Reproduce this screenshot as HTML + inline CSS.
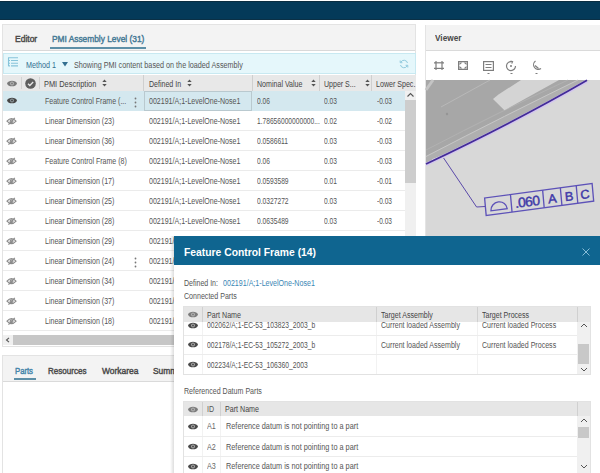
<!DOCTYPE html>
<html><head><meta charset="utf-8">
<style>
*{box-sizing:border-box;margin:0;padding:0}
html,body{width:600px;height:473px;overflow:hidden;background:#fff;font-family:"Liberation Sans",sans-serif;color:#555;position:relative}
#w{position:absolute;left:0;top:0;width:600px;height:473px;overflow:hidden}
.a{position:absolute}
.t{position:absolute;white-space:nowrap}
svg{overflow:visible}
</style></head><body><div id="w">
<div class="a" style="left:0px;top:1px;width:600px;height:19px;background:#043a59;"></div>
<div class="a" style="left:0px;top:1px;width:600px;height:1px;background:#0a2d40;"></div>
<div class="a" style="left:0px;top:19px;width:600px;height:1px;background:#0b3045;"></div>
<div class="a" style="left:2px;top:24px;width:414px;height:323px;background:#fff;border:1px solid #e3e3e3"></div>
<div class="a" style="left:3px;top:25px;width:412px;height:25px;background:#f3f3f3;"></div>
<div class="a" style="left:3px;top:50px;width:412px;height:1px;background:#d9d9d9;"></div>
<div class="t" style="left:15px;top:33.0px;font-size:9.52px;letter-spacing:0;color:#4a4a4a;font-weight:normal;line-height:12px;transform:scaleX(0.8924);transform-origin:0 50%;-webkit-text-stroke:0.45px currentColor">Editor</div>
<div class="t" style="left:51.5px;top:33.0px;font-size:9.52px;letter-spacing:0;color:#467a96;font-weight:normal;line-height:12px;transform:scaleX(0.8771);transform-origin:0 50%;-webkit-text-stroke:0.45px currentColor">PMI Assembly Level (31)</div>
<div class="a" style="left:50px;top:47px;width:96px;height:2px;background:#5d8fa7;"></div>
<div class="a" style="left:3px;top:52.5px;width:413px;height:21.5px;background:#e5f7fb;border:1px solid #c8e9f1"></div>
<svg class="a" style="left:8px;top:57px" width="10" height="10" viewBox="0 0 10 10"><g stroke="#86c4da" stroke-width="1.1" fill="none"><path d="M0 0.8h10M0.5 0.8v8.5M3 3.5h7M3 6.2h7M3 8.9h7M0.5 3.5h1.5M0.5 6.2h1.5M0.5 8.9h1.5"/></g></svg>
<div class="t" style="left:26px;top:58.8px;font-size:8.40px;letter-spacing:0;color:#336f90;font-weight:normal;line-height:12px;transform:scaleX(0.8585);transform-origin:0 50%;">Method 1</div>
<svg class="a" style="left:62px;top:62px" width="6" height="5" viewBox="0 0 6 5"><path d="M0 0h6L3 4.5z" fill="#336f90"/></svg>
<div class="t" style="left:74px;top:58.8px;font-size:8.40px;letter-spacing:0;color:#555;font-weight:normal;line-height:12px;transform:scaleX(0.8634);transform-origin:0 50%;">Showing PMI content based on the loaded Assembly</div>
<svg class="a" style="left:399px;top:59px" width="10" height="10" viewBox="0 0 10 10"><g fill="none" stroke="#8fc9dd" stroke-width="1"><path d="M8.5 4A3.6 3.6 0 0 0 1.8 3.2M1.5 6A3.6 3.6 0 0 0 8.2 6.8"/><path d="M1.2 1.5v2.2h2.2M8.8 8.5V6.3H6.6"/></g></svg>
<div class="a" style="left:3px;top:75px;width:413px;height:16px;background:#e8e8e8;"></div>
<svg class="a" style="left:7px;top:80px" width="10" height="7" viewBox="0 0 10 7"><path d="M0 3.5C1 -0.3 9 -0.3 10 3.5C9 7.3 1 7.3 0 3.5Z" fill="#7a7a7a"/><circle cx="5" cy="3.5" r="1.9" fill="#e8e8e8" opacity="0.55"/><circle cx="5" cy="3.5" r="1" fill="#7a7a7a"/></svg>
<div class="a" style="left:21px;top:77px;width:1px;height:12px;background:#d2d2d2;"></div>
<svg class="a" style="left:25px;top:78px" width="11" height="11" viewBox="0 0 11 11"><circle cx="5.5" cy="5.5" r="5.3" fill="#5e5e5e"/><path d="M3 5.7l1.8 1.8L8.2 4" stroke="#e8e8e8" stroke-width="1.3" fill="none"/></svg>
<div class="a" style="left:39px;top:77px;width:1px;height:12px;background:#d2d2d2;"></div>
<div class="t" style="left:43.8px;top:77.5px;font-size:8.40px;letter-spacing:0;color:#444;font-weight:normal;line-height:12px;transform:scaleX(0.8852);transform-origin:0 50%;">PMI Description</div>
<svg class="a" style="left:101.5px;top:79px" width="5" height="8" viewBox="0 0 5 8"><path d="M0.3 3.1h4.4L2.5 0.6zM0.3 4.9h4.4L2.5 7.4z" fill="#555"/></svg>
<div class="a" style="left:143px;top:75px;width:1px;height:16px;background:#cfcfcf;"></div>
<div class="t" style="left:149px;top:77.5px;font-size:8.40px;letter-spacing:0;color:#444;font-weight:normal;line-height:12px;transform:scaleX(0.8406);transform-origin:0 50%;">Defined In</div>
<svg class="a" style="left:187px;top:79px" width="5" height="8" viewBox="0 0 5 8"><path d="M0.3 3.1h4.4L2.5 0.6zM0.3 4.9h4.4L2.5 7.4z" fill="#555"/></svg>
<div class="a" style="left:252px;top:75px;width:1px;height:16px;background:#cfcfcf;"></div>
<div class="t" style="left:257px;top:77.5px;font-size:8.40px;letter-spacing:0;color:#444;font-weight:normal;line-height:12px;transform:scaleX(0.8447);transform-origin:0 50%;">Nominal Value</div>
<svg class="a" style="left:311px;top:79px" width="5" height="8" viewBox="0 0 5 8"><path d="M0.3 3.1h4.4L2.5 0.6zM0.3 4.9h4.4L2.5 7.4z" fill="#555"/></svg>
<div class="a" style="left:319px;top:75px;width:1px;height:16px;background:#cfcfcf;"></div>
<div class="t" style="left:324px;top:77.5px;font-size:8.40px;letter-spacing:0;color:#444;font-weight:normal;line-height:12px;transform:scaleX(0.8399);transform-origin:0 50%;">Upper S...</div>
<svg class="a" style="left:365px;top:79px" width="5" height="8" viewBox="0 0 5 8"><path d="M0.3 3.1h4.4L2.5 0.6zM0.3 4.9h4.4L2.5 7.4z" fill="#555"/></svg>
<div class="a" style="left:371px;top:75px;width:1px;height:16px;background:#cfcfcf;"></div>
<div class="t" style="left:376px;top:77.5px;font-size:8.40px;letter-spacing:0;color:#444;font-weight:normal;line-height:12px;transform:scaleX(0.8457);transform-origin:0 50%;">Lower Spec.</div>
<div class="a" style="left:3px;top:91px;width:402px;height:20px;background:#d4e8ef;"></div>
<svg class="a" style="left:7px;top:97px" width="10" height="7" viewBox="0 0 10 7"><path d="M0 3.5C1 -0.3 9 -0.3 10 3.5C9 7.3 1 7.3 0 3.5Z" fill="#474747"/><circle cx="5" cy="3.5" r="1.9" fill="#d4e8ef" opacity="0.55"/><circle cx="5" cy="3.5" r="1" fill="#474747"/></svg>
<div class="a" style="left:144px;top:91px;width:108px;height:20px;background:transparent;border:1px solid #b9c9cf"></div>
<div class="t" style="left:44.5px;top:95.3px;font-size:8.40px;letter-spacing:0;color:#555;font-weight:normal;line-height:12px;transform:scaleX(0.8393);transform-origin:0 50%;">Feature Control Frame (...</div>
<div class="t" style="left:148.5px;top:95.3px;font-size:8.40px;letter-spacing:0;color:#555;font-weight:normal;line-height:12px;transform:scaleX(0.8423);transform-origin:0 50%;">002191/A;1-LevelOne-Nose1</div>
<div class="t" style="left:257px;top:95.3px;font-size:8.40px;letter-spacing:0;color:#555;font-weight:normal;line-height:12px;transform:scaleX(0.7900);transform-origin:0 50%;">0.06</div>
<div class="t" style="left:324px;top:95.3px;font-size:8.40px;letter-spacing:0;color:#555;font-weight:normal;line-height:12px;transform:scaleX(0.7900);transform-origin:0 50%;">0.03</div>
<div class="t" style="left:376.6px;top:95.3px;font-size:8.40px;letter-spacing:0;color:#555;font-weight:normal;line-height:12px;transform:scaleX(0.7831);transform-origin:0 50%;">-0.03</div>
<svg class="a" style="left:134px;top:96.5px" width="3" height="11" viewBox="0 0 3 11"><circle cx="1.5" cy="1.5" r="0.9" fill="#777"/><circle cx="1.5" cy="5.5" r="0.9" fill="#777"/><circle cx="1.5" cy="9.5" r="0.9" fill="#777"/></svg>
<div class="a" style="left:3px;top:130px;width:402px;height:1px;background:#ebebeb;"></div>
<svg class="a" style="left:6px;top:117px" width="11" height="9" viewBox="0 0 11 9"><g fill="none" stroke="#8c8c8c" stroke-width="1.2"><path d="M1 4.2Q5.5 -0.8 10 4.2Q5.5 9.2 1 4.2z"/><circle cx="5.5" cy="4.2" r="1.4"/><path d="M2.5 7.6L8.8 0.8"/></g></svg>
<div class="t" style="left:44.5px;top:115.3px;font-size:8.40px;letter-spacing:0;color:#555;font-weight:normal;line-height:12px;transform:scaleX(0.8420);transform-origin:0 50%;">Linear Dimension (23)</div>
<div class="t" style="left:148.5px;top:115.3px;font-size:8.40px;letter-spacing:0;color:#555;font-weight:normal;line-height:12px;transform:scaleX(0.8423);transform-origin:0 50%;">002191/A;1-LevelOne-Nose1</div>
<div class="t" style="left:257px;top:115.3px;font-size:8.40px;letter-spacing:0;color:#555;font-weight:normal;line-height:12px;transform:scaleX(0.7923);transform-origin:0 50%;">1.78656000000000...</div>
<div class="t" style="left:324px;top:115.3px;font-size:8.40px;letter-spacing:0;color:#555;font-weight:normal;line-height:12px;transform:scaleX(0.7900);transform-origin:0 50%;">0.02</div>
<div class="t" style="left:376.6px;top:115.3px;font-size:8.40px;letter-spacing:0;color:#555;font-weight:normal;line-height:12px;transform:scaleX(0.7831);transform-origin:0 50%;">-0.02</div>
<div class="a" style="left:3px;top:150px;width:402px;height:1px;background:#ebebeb;"></div>
<svg class="a" style="left:6px;top:137px" width="11" height="9" viewBox="0 0 11 9"><g fill="none" stroke="#8c8c8c" stroke-width="1.2"><path d="M1 4.2Q5.5 -0.8 10 4.2Q5.5 9.2 1 4.2z"/><circle cx="5.5" cy="4.2" r="1.4"/><path d="M2.5 7.6L8.8 0.8"/></g></svg>
<div class="t" style="left:44.5px;top:135.3px;font-size:8.40px;letter-spacing:0;color:#555;font-weight:normal;line-height:12px;transform:scaleX(0.8420);transform-origin:0 50%;">Linear Dimension (36)</div>
<div class="t" style="left:148.5px;top:135.3px;font-size:8.40px;letter-spacing:0;color:#555;font-weight:normal;line-height:12px;transform:scaleX(0.8423);transform-origin:0 50%;">002191/A;1-LevelOne-Nose1</div>
<div class="t" style="left:257px;top:135.3px;font-size:8.40px;letter-spacing:0;color:#555;font-weight:normal;line-height:12px;transform:scaleX(0.7961);transform-origin:0 50%;">0.0586611</div>
<div class="t" style="left:324px;top:135.3px;font-size:8.40px;letter-spacing:0;color:#555;font-weight:normal;line-height:12px;transform:scaleX(0.7900);transform-origin:0 50%;">0.03</div>
<div class="t" style="left:376.6px;top:135.3px;font-size:8.40px;letter-spacing:0;color:#555;font-weight:normal;line-height:12px;transform:scaleX(0.7831);transform-origin:0 50%;">-0.03</div>
<div class="a" style="left:3px;top:170px;width:402px;height:1px;background:#ebebeb;"></div>
<svg class="a" style="left:6px;top:157px" width="11" height="9" viewBox="0 0 11 9"><g fill="none" stroke="#8c8c8c" stroke-width="1.2"><path d="M1 4.2Q5.5 -0.8 10 4.2Q5.5 9.2 1 4.2z"/><circle cx="5.5" cy="4.2" r="1.4"/><path d="M2.5 7.6L8.8 0.8"/></g></svg>
<div class="t" style="left:44.5px;top:155.3px;font-size:8.40px;letter-spacing:0;color:#555;font-weight:normal;line-height:12px;transform:scaleX(0.8416);transform-origin:0 50%;">Feature Control Frame (8)</div>
<div class="t" style="left:148.5px;top:155.3px;font-size:8.40px;letter-spacing:0;color:#555;font-weight:normal;line-height:12px;transform:scaleX(0.8423);transform-origin:0 50%;">002191/A;1-LevelOne-Nose1</div>
<div class="t" style="left:257px;top:155.3px;font-size:8.40px;letter-spacing:0;color:#555;font-weight:normal;line-height:12px;transform:scaleX(0.7900);transform-origin:0 50%;">0.06</div>
<div class="t" style="left:324px;top:155.3px;font-size:8.40px;letter-spacing:0;color:#555;font-weight:normal;line-height:12px;transform:scaleX(0.7900);transform-origin:0 50%;">0.03</div>
<div class="t" style="left:376.6px;top:155.3px;font-size:8.40px;letter-spacing:0;color:#555;font-weight:normal;line-height:12px;transform:scaleX(0.7831);transform-origin:0 50%;">-0.03</div>
<div class="a" style="left:3px;top:190px;width:402px;height:1px;background:#ebebeb;"></div>
<svg class="a" style="left:6px;top:177px" width="11" height="9" viewBox="0 0 11 9"><g fill="none" stroke="#8c8c8c" stroke-width="1.2"><path d="M1 4.2Q5.5 -0.8 10 4.2Q5.5 9.2 1 4.2z"/><circle cx="5.5" cy="4.2" r="1.4"/><path d="M2.5 7.6L8.8 0.8"/></g></svg>
<div class="t" style="left:44.5px;top:175.3px;font-size:8.40px;letter-spacing:0;color:#555;font-weight:normal;line-height:12px;transform:scaleX(0.8420);transform-origin:0 50%;">Linear Dimension (17)</div>
<div class="t" style="left:148.5px;top:175.3px;font-size:8.40px;letter-spacing:0;color:#555;font-weight:normal;line-height:12px;transform:scaleX(0.8423);transform-origin:0 50%;">002191/A;1-LevelOne-Nose1</div>
<div class="t" style="left:257px;top:175.3px;font-size:8.40px;letter-spacing:0;color:#555;font-weight:normal;line-height:12px;transform:scaleX(0.7976);transform-origin:0 50%;">0.0593589</div>
<div class="t" style="left:324px;top:175.3px;font-size:8.40px;letter-spacing:0;color:#555;font-weight:normal;line-height:12px;transform:scaleX(0.7900);transform-origin:0 50%;">0.01</div>
<div class="t" style="left:376.6px;top:175.3px;font-size:8.40px;letter-spacing:0;color:#555;font-weight:normal;line-height:12px;transform:scaleX(0.7831);transform-origin:0 50%;">-0.01</div>
<div class="a" style="left:3px;top:210px;width:402px;height:1px;background:#ebebeb;"></div>
<svg class="a" style="left:6px;top:197px" width="11" height="9" viewBox="0 0 11 9"><g fill="none" stroke="#8c8c8c" stroke-width="1.2"><path d="M1 4.2Q5.5 -0.8 10 4.2Q5.5 9.2 1 4.2z"/><circle cx="5.5" cy="4.2" r="1.4"/><path d="M2.5 7.6L8.8 0.8"/></g></svg>
<div class="t" style="left:44.5px;top:195.3px;font-size:8.40px;letter-spacing:0;color:#555;font-weight:normal;line-height:12px;transform:scaleX(0.8420);transform-origin:0 50%;">Linear Dimension (25)</div>
<div class="t" style="left:148.5px;top:195.3px;font-size:8.40px;letter-spacing:0;color:#555;font-weight:normal;line-height:12px;transform:scaleX(0.8423);transform-origin:0 50%;">002191/A;1-LevelOne-Nose1</div>
<div class="t" style="left:257px;top:195.3px;font-size:8.40px;letter-spacing:0;color:#555;font-weight:normal;line-height:12px;transform:scaleX(0.7976);transform-origin:0 50%;">0.0327272</div>
<div class="t" style="left:324px;top:195.3px;font-size:8.40px;letter-spacing:0;color:#555;font-weight:normal;line-height:12px;transform:scaleX(0.7900);transform-origin:0 50%;">0.03</div>
<div class="t" style="left:376.6px;top:195.3px;font-size:8.40px;letter-spacing:0;color:#555;font-weight:normal;line-height:12px;transform:scaleX(0.7831);transform-origin:0 50%;">-0.03</div>
<div class="a" style="left:3px;top:230px;width:402px;height:1px;background:#ebebeb;"></div>
<svg class="a" style="left:6px;top:217px" width="11" height="9" viewBox="0 0 11 9"><g fill="none" stroke="#8c8c8c" stroke-width="1.2"><path d="M1 4.2Q5.5 -0.8 10 4.2Q5.5 9.2 1 4.2z"/><circle cx="5.5" cy="4.2" r="1.4"/><path d="M2.5 7.6L8.8 0.8"/></g></svg>
<div class="t" style="left:44.5px;top:215.3px;font-size:8.40px;letter-spacing:0;color:#555;font-weight:normal;line-height:12px;transform:scaleX(0.8420);transform-origin:0 50%;">Linear Dimension (28)</div>
<div class="t" style="left:148.5px;top:215.3px;font-size:8.40px;letter-spacing:0;color:#555;font-weight:normal;line-height:12px;transform:scaleX(0.8423);transform-origin:0 50%;">002191/A;1-LevelOne-Nose1</div>
<div class="t" style="left:257px;top:215.3px;font-size:8.40px;letter-spacing:0;color:#555;font-weight:normal;line-height:12px;transform:scaleX(0.7976);transform-origin:0 50%;">0.0635489</div>
<div class="t" style="left:324px;top:215.3px;font-size:8.40px;letter-spacing:0;color:#555;font-weight:normal;line-height:12px;transform:scaleX(0.7900);transform-origin:0 50%;">0.03</div>
<div class="t" style="left:376.6px;top:215.3px;font-size:8.40px;letter-spacing:0;color:#555;font-weight:normal;line-height:12px;transform:scaleX(0.7831);transform-origin:0 50%;">-0.03</div>
<div class="a" style="left:3px;top:250px;width:402px;height:1px;background:#ebebeb;"></div>
<svg class="a" style="left:6px;top:237px" width="11" height="9" viewBox="0 0 11 9"><g fill="none" stroke="#8c8c8c" stroke-width="1.2"><path d="M1 4.2Q5.5 -0.8 10 4.2Q5.5 9.2 1 4.2z"/><circle cx="5.5" cy="4.2" r="1.4"/><path d="M2.5 7.6L8.8 0.8"/></g></svg>
<div class="t" style="left:44.5px;top:235.3px;font-size:8.40px;letter-spacing:0;color:#555;font-weight:normal;line-height:12px;transform:scaleX(0.8420);transform-origin:0 50%;">Linear Dimension (29)</div>
<div class="t" style="left:148.5px;top:235.3px;font-size:8.40px;letter-spacing:0;color:#555;font-weight:normal;line-height:12px;transform:scaleX(0.8423);transform-origin:0 50%;">002191/A;1-LevelOne-Nose1</div>
<div class="a" style="left:3px;top:270px;width:402px;height:1px;background:#ebebeb;"></div>
<svg class="a" style="left:6px;top:257px" width="11" height="9" viewBox="0 0 11 9"><g fill="none" stroke="#8c8c8c" stroke-width="1.2"><path d="M1 4.2Q5.5 -0.8 10 4.2Q5.5 9.2 1 4.2z"/><circle cx="5.5" cy="4.2" r="1.4"/><path d="M2.5 7.6L8.8 0.8"/></g></svg>
<div class="t" style="left:44.5px;top:255.3px;font-size:8.40px;letter-spacing:0;color:#555;font-weight:normal;line-height:12px;transform:scaleX(0.8420);transform-origin:0 50%;">Linear Dimension (24)</div>
<div class="t" style="left:148.5px;top:255.3px;font-size:8.40px;letter-spacing:0;color:#555;font-weight:normal;line-height:12px;transform:scaleX(0.8423);transform-origin:0 50%;">002191/A;1-LevelOne-Nose1</div>
<svg class="a" style="left:134px;top:256.5px" width="3" height="11" viewBox="0 0 3 11"><circle cx="1.5" cy="1.5" r="0.9" fill="#777"/><circle cx="1.5" cy="5.5" r="0.9" fill="#777"/><circle cx="1.5" cy="9.5" r="0.9" fill="#777"/></svg>
<div class="a" style="left:3px;top:290px;width:402px;height:1px;background:#ebebeb;"></div>
<svg class="a" style="left:6px;top:277px" width="11" height="9" viewBox="0 0 11 9"><g fill="none" stroke="#8c8c8c" stroke-width="1.2"><path d="M1 4.2Q5.5 -0.8 10 4.2Q5.5 9.2 1 4.2z"/><circle cx="5.5" cy="4.2" r="1.4"/><path d="M2.5 7.6L8.8 0.8"/></g></svg>
<div class="t" style="left:44.5px;top:275.3px;font-size:8.40px;letter-spacing:0;color:#555;font-weight:normal;line-height:12px;transform:scaleX(0.8420);transform-origin:0 50%;">Linear Dimension (34)</div>
<div class="t" style="left:148.5px;top:275.3px;font-size:8.40px;letter-spacing:0;color:#555;font-weight:normal;line-height:12px;transform:scaleX(0.8423);transform-origin:0 50%;">002191/A;1-LevelOne-Nose1</div>
<div class="a" style="left:3px;top:310px;width:402px;height:1px;background:#ebebeb;"></div>
<svg class="a" style="left:6px;top:297px" width="11" height="9" viewBox="0 0 11 9"><g fill="none" stroke="#8c8c8c" stroke-width="1.2"><path d="M1 4.2Q5.5 -0.8 10 4.2Q5.5 9.2 1 4.2z"/><circle cx="5.5" cy="4.2" r="1.4"/><path d="M2.5 7.6L8.8 0.8"/></g></svg>
<div class="t" style="left:44.5px;top:295.3px;font-size:8.40px;letter-spacing:0;color:#555;font-weight:normal;line-height:12px;transform:scaleX(0.8420);transform-origin:0 50%;">Linear Dimension (37)</div>
<div class="t" style="left:148.5px;top:295.3px;font-size:8.40px;letter-spacing:0;color:#555;font-weight:normal;line-height:12px;transform:scaleX(0.8423);transform-origin:0 50%;">002191/A;1-LevelOne-Nose1</div>
<div class="a" style="left:3px;top:330px;width:402px;height:1px;background:#ebebeb;"></div>
<svg class="a" style="left:6px;top:317px" width="11" height="9" viewBox="0 0 11 9"><g fill="none" stroke="#8c8c8c" stroke-width="1.2"><path d="M1 4.2Q5.5 -0.8 10 4.2Q5.5 9.2 1 4.2z"/><circle cx="5.5" cy="4.2" r="1.4"/><path d="M2.5 7.6L8.8 0.8"/></g></svg>
<div class="t" style="left:44.5px;top:315.3px;font-size:8.40px;letter-spacing:0;color:#555;font-weight:normal;line-height:12px;transform:scaleX(0.8420);transform-origin:0 50%;">Linear Dimension (18)</div>
<div class="t" style="left:148.5px;top:315.3px;font-size:8.40px;letter-spacing:0;color:#555;font-weight:normal;line-height:12px;transform:scaleX(0.8423);transform-origin:0 50%;">002191/A;1-LevelOne-Nose1</div>
<div class="a" style="left:405px;top:91px;width:11px;height:244px;background:#f0f0f0;"></div>
<svg class="a" style="left:406px;top:92px" width="9" height="6" viewBox="0 0 9 6"><path d="M1.5 4.5L4.5 1.5L7.5 4.5" stroke="#555" stroke-width="1.1" fill="none"/></svg>
<div class="a" style="left:405px;top:100px;width:11px;height:83px;background:#cdcdcd;"></div>
<div class="a" style="left:3px;top:335px;width:413px;height:10px;background:#f0f0f0;"></div>
<svg class="a" style="left:5px;top:337px" width="6" height="6" viewBox="0 0 6 6"><path d="M4 0.8L1.5 3L4 5.2" stroke="#555" stroke-width="1.1" fill="none"/></svg>
<div class="a" style="left:13px;top:335px;width:392px;height:10px;background:#c7c7c7;"></div>
<div class="a" style="left:425px;top:25px;width:175px;height:25px;background:#f3f3f3;"></div>
<div class="a" style="left:425px;top:49.5px;width:175px;height:1.5px;background:#dadada;"></div>
<div class="a" style="left:425px;top:25px;width:1px;height:211px;background:#e4e4e4;"></div>
<div class="t" style="left:435px;top:32.0px;font-size:8.93px;letter-spacing:0;color:#484848;font-weight:bold;line-height:12px;transform:scaleX(0.9251);transform-origin:0 50%;">Viewer</div>
<svg class="a" style="left:434px;top:61px" width="10" height="9" viewBox="0 0 10 9"><g fill="none" stroke="#7e7e7e" stroke-width="1.2"><rect x="2" y="1.8" width="6" height="5.6"/><path d="M0 1.8h2M8 1.8h2M0 7.4h2M8 7.4h2M2 0v1.8M8 0v1.8M2 7.4v1.6M8 7.4v1.6"/></g></svg>
<svg class="a" style="left:458px;top:61px" width="10" height="9" viewBox="0 0 10 9"><rect x="0.6" y="0.6" width="8.8" height="7.8" fill="none" stroke="#7e7e7e" stroke-width="1.2"/><g fill="#7e7e7e"><path d="M1.5 1.5h3l-3 2.5zM8.5 1.5h-3l3 2.5zM1.5 7.5h3l-3-2.5zM8.5 7.5h-3l3-2.5z"/></g></svg>
<svg class="a" style="left:482.5px;top:61px" width="11" height="14" viewBox="0 0 11 14"><g fill="none" stroke="#7e7e7e" stroke-width="1.2"><rect x="0.6" y="0.6" width="9.8" height="8.8"/><path d="M2.5 3.5h6M2.5 6.5h6"/></g><path d="M4.5 12.5h2" stroke="#7e7e7e" stroke-width="1"/></svg>
<svg class="a" style="left:506px;top:61px" width="11" height="14" viewBox="0 0 11 14"><g fill="none" stroke="#7e7e7e" stroke-width="1.2"><path d="M9.5 5A4.5 4.5 0 1 1 5.5 0.6"/><path d="M4.5 0.2l2 0.5-0.8 1.8"/></g><circle cx="5" cy="5" r="1" fill="#7e7e7e"/><path d="M4.5 12.5h2" stroke="#7e7e7e" stroke-width="1"/></svg>
<svg class="a" style="left:531px;top:60px" width="11" height="15" viewBox="0 0 11 15"><g fill="none" stroke="#7e7e7e" stroke-width="1.2"><path d="M4.5 1A4.5 4.5 0 1 0 10 8.5"/><path d="M4 5.5l3.5 3"/></g><path d="M4.5 13.5h2" stroke="#7e7e7e" stroke-width="1"/></svg>
<div class="a" style="left:426px;top:80px;width:174px;height:160px;background:#d8d8d8;"></div>
<svg class="a" style="left:426px;top:80px" width="174" height="156" viewBox="426 80 174 156">
<path d="M426 80H590L586.5 80.5Q514.5 122 426 164Z" fill="#a7a7a7"/>
<path d="M426 164Q514.5 122 587 80H577Q507 114 426 156Z" fill="#afafaf"/>
<path d="M426 156.5Q507 114.5 578 80" fill="none" stroke="#c6c6c6" stroke-width="1"/>
<path d="M426 150Q503 110 568 80" fill="none" stroke="#b4b4b4" stroke-width="0.8"/>
<path d="M493 99L498.5 94.5L521 80H559L504.4 110.3Z" fill="#d4d4d4"/>
<path d="M426 90L433 80" stroke="#c4c4c4" stroke-width="3"/>
<path d="M441 107L490 80" stroke="#bdbdbd" stroke-width="0.8"/>
<circle cx="447" cy="114" r="1.2" fill="#959595"/>
<path d="M432 160L443 156" stroke="#dcdcdc" stroke-width="1.5"/>
<path d="M426 164.5Q514.5 123 587 81" fill="none" stroke="#d3c6ee" stroke-width="3.2"/>
<path d="M426 164Q514.5 122.3 587 80.3" fill="none" stroke="#432c98" stroke-width="1.8"/>
<path d="M443.6 158L476.6 207L485 206.5" fill="none" stroke="#5b4aaa" stroke-width="1"/>
<g transform="matrix(1.018,-0.1375,0.09,1,484.6,198)">
 <g fill="none" stroke="#5d52b8" stroke-width="1.3">
  <path d="M0 0H105.6V17.6H0Z"/>
  <path d="M25.4 0v17.6M57 0v17.6M74.4 0v17.6M90 0v17.6"/>
  <path d="M5 13.5A7.7 7.5 0 0 1 21 13.5Z"/>
 </g>
 <g fill="#4038a8" stroke="#4038a8" stroke-width="0.45" font-family="Liberation Sans" font-size="13.5">
  <text x="29" y="14" letter-spacing="-0.6">.060</text>
  <text x="65.7" y="14" text-anchor="middle" font-size="12.5">A</text>
  <text x="82.2" y="14" text-anchor="middle" font-size="12.5">B</text>
  <text x="97.8" y="14" text-anchor="middle" font-size="12.5">C</text>
 </g>
</g>
</svg>
<div class="a" style="left:2px;top:355px;width:200px;height:125px;background:#fff;border:1px solid #e3e3e3"></div>
<div class="a" style="left:3px;top:356px;width:198px;height:26px;background:#f3f3f3;"></div>
<div class="a" style="left:3px;top:381px;width:198px;height:1px;background:#dadada;"></div>
<div class="t" style="left:15px;top:364.5px;font-size:9.52px;letter-spacing:0;color:#4585aa;font-weight:normal;line-height:12px;transform:scaleX(0.8092);transform-origin:0 50%;-webkit-text-stroke:0.45px currentColor">Parts</div>
<div class="a" style="left:13.5px;top:378px;width:22px;height:2px;background:#5d8fa7;"></div>
<div class="t" style="left:48px;top:364.5px;font-size:9.52px;letter-spacing:0;color:#4a4a4a;font-weight:normal;line-height:12px;transform:scaleX(0.8450);transform-origin:0 50%;-webkit-text-stroke:0.45px currentColor">Resources</div>
<div class="t" style="left:101.5px;top:364.5px;font-size:9.52px;letter-spacing:0;color:#4a4a4a;font-weight:normal;line-height:12px;transform:scaleX(0.8885);transform-origin:0 50%;-webkit-text-stroke:0.45px currentColor">Workarea</div>
<div class="t" style="left:152.5px;top:364.5px;font-size:9.52px;letter-spacing:0;color:#4a4a4a;font-weight:normal;line-height:12px;transform:scaleX(0.8838);transform-origin:0 50%;-webkit-text-stroke:0.45px currentColor">Summary</div>
<div class="a" style="left:169.6px;top:236px;width:4px;height:237px;background:linear-gradient(90deg,rgba(0,0,0,0.0),rgba(0,0,0,0.13));"></div>
<div class="a" style="left:173.6px;top:236px;width:426.4px;height:237px;background:#fff;"></div>
<div class="a" style="left:173.6px;top:236px;width:426.4px;height:29px;background:#0f6590;"></div>
<div class="t" style="left:184px;top:245.5px;font-size:11.00px;letter-spacing:0;color:#fff;font-weight:bold;line-height:12px;transform:scaleX(0.9390);transform-origin:0 50%;">Feature Control Frame (14)</div>
<svg class="a" style="left:582px;top:247.5px" width="8" height="8" viewBox="0 0 8 8"><path d="M0.5 0.5l7 7M7.5 0.5l-7 7" stroke="#86bcd6" stroke-width="1"/></svg>
<div class="t" style="left:183.5px;top:277.3px;font-size:8.40px;letter-spacing:0;color:#555;font-weight:normal;line-height:12px;transform:scaleX(0.8386);transform-origin:0 50%;">Defined In:</div>
<div class="t" style="left:223px;top:277.0px;font-size:8.40px;letter-spacing:0;color:#3a86b4;font-weight:normal;line-height:12px;transform:scaleX(0.8469);transform-origin:0 50%;">002191/A;1-LevelOne-Nose1</div>
<div class="t" style="left:183.7px;top:290.0px;font-size:8.40px;letter-spacing:0;color:#555;font-weight:normal;line-height:12px;transform:scaleX(0.8449);transform-origin:0 50%;">Connected Parts</div>
<div class="a" style="left:183px;top:306px;width:408px;height:69px;background:#fff;border:1px solid #e2e2e2"></div>
<div class="a" style="left:184px;top:307px;width:406px;height:15px;background:#e6e6e6;"></div>
<svg class="a" style="left:188px;top:311px" width="10" height="7" viewBox="0 0 10 7"><path d="M0 3.5C1 -0.3 9 -0.3 10 3.5C9 7.3 1 7.3 0 3.5Z" fill="#7c7c7c"/><circle cx="5" cy="3.5" r="1.9" fill="#e6e6e6" opacity="0.55"/><circle cx="5" cy="3.5" r="1" fill="#7c7c7c"/></svg>
<div class="a" style="left:202px;top:307px;width:1px;height:15px;background:#d0d0d0;"></div>
<div class="t" style="left:207px;top:308.5px;font-size:8.40px;letter-spacing:0;color:#444;font-weight:normal;line-height:12px;transform:scaleX(0.8480);transform-origin:0 50%;">Part Name</div>
<div class="a" style="left:376px;top:307px;width:1px;height:15px;background:#d0d0d0;"></div>
<div class="t" style="left:381px;top:308.5px;font-size:8.40px;letter-spacing:0;color:#444;font-weight:normal;line-height:12px;transform:scaleX(0.8441);transform-origin:0 50%;">Target Assembly</div>
<div class="a" style="left:477px;top:307px;width:1px;height:15px;background:#d0d0d0;"></div>
<div class="t" style="left:482px;top:308.5px;font-size:8.40px;letter-spacing:0;color:#444;font-weight:normal;line-height:12px;transform:scaleX(0.8428);transform-origin:0 50%;">Target Process</div>
<div class="a" style="left:577px;top:307px;width:1px;height:15px;background:#d0d0d0;"></div>
<svg class="a" style="left:188px;top:321.5px" width="10" height="7" viewBox="0 0 10 7"><path d="M0 3.5C1 -0.3 9 -0.3 10 3.5C9 7.3 1 7.3 0 3.5Z" fill="#4a4a4a"/><circle cx="5" cy="3.5" r="1.9" fill="#fff" opacity="0.55"/><circle cx="5" cy="3.5" r="1" fill="#4a4a4a"/></svg>
<div class="t" style="left:206.5px;top:319.0px;font-size:8.40px;letter-spacing:0;color:#555;font-weight:normal;line-height:12px;transform:scaleX(0.8039);transform-origin:0 50%;">002062/A;1-EC-53_103823_2003_b</div>
<div class="t" style="left:381px;top:319.0px;font-size:8.40px;letter-spacing:0;color:#555;font-weight:normal;line-height:12px;transform:scaleX(0.8438);transform-origin:0 50%;">Current loaded Assembly</div>
<div class="t" style="left:482px;top:319.0px;font-size:8.40px;letter-spacing:0;color:#555;font-weight:normal;line-height:12px;transform:scaleX(0.8430);transform-origin:0 50%;">Current loaded Process</div>
<svg class="a" style="left:188px;top:341.0px" width="10" height="7" viewBox="0 0 10 7"><path d="M0 3.5C1 -0.3 9 -0.3 10 3.5C9 7.3 1 7.3 0 3.5Z" fill="#4a4a4a"/><circle cx="5" cy="3.5" r="1.9" fill="#fff" opacity="0.55"/><circle cx="5" cy="3.5" r="1" fill="#4a4a4a"/></svg>
<div class="t" style="left:206.5px;top:338.5px;font-size:8.40px;letter-spacing:0;color:#555;font-weight:normal;line-height:12px;transform:scaleX(0.8039);transform-origin:0 50%;">002178/A;1-EC-53_105272_2003_b</div>
<div class="t" style="left:381px;top:338.5px;font-size:8.40px;letter-spacing:0;color:#555;font-weight:normal;line-height:12px;transform:scaleX(0.8438);transform-origin:0 50%;">Current loaded Assembly</div>
<div class="t" style="left:482px;top:338.5px;font-size:8.40px;letter-spacing:0;color:#555;font-weight:normal;line-height:12px;transform:scaleX(0.8430);transform-origin:0 50%;">Current loaded Process</div>
<svg class="a" style="left:188px;top:361.0px" width="10" height="7" viewBox="0 0 10 7"><path d="M0 3.5C1 -0.3 9 -0.3 10 3.5C9 7.3 1 7.3 0 3.5Z" fill="#4a4a4a"/><circle cx="5" cy="3.5" r="1.9" fill="#fff" opacity="0.55"/><circle cx="5" cy="3.5" r="1" fill="#4a4a4a"/></svg>
<div class="t" style="left:206.5px;top:358.5px;font-size:8.40px;letter-spacing:0;color:#555;font-weight:normal;line-height:12px;transform:scaleX(0.8037);transform-origin:0 50%;">002234/A;1-EC-53_106360_2003</div>
<div class="a" style="left:184px;top:307px;width:406px;height:15px;background:#e6e6e6;"></div>
<svg class="a" style="left:188px;top:311px" width="10" height="7" viewBox="0 0 10 7"><path d="M0 3.5C1 -0.3 9 -0.3 10 3.5C9 7.3 1 7.3 0 3.5Z" fill="#7c7c7c"/><circle cx="5" cy="3.5" r="1.9" fill="#e6e6e6" opacity="0.55"/><circle cx="5" cy="3.5" r="1" fill="#7c7c7c"/></svg>
<div class="a" style="left:202px;top:307px;width:1px;height:15px;background:#d0d0d0;"></div>
<div class="t" style="left:207px;top:308.5px;font-size:8.40px;letter-spacing:0;color:#444;font-weight:normal;line-height:12px;transform:scaleX(0.8480);transform-origin:0 50%;">Part Name</div>
<div class="a" style="left:376px;top:307px;width:1px;height:15px;background:#d0d0d0;"></div>
<div class="t" style="left:381px;top:308.5px;font-size:8.40px;letter-spacing:0;color:#444;font-weight:normal;line-height:12px;transform:scaleX(0.8441);transform-origin:0 50%;">Target Assembly</div>
<div class="a" style="left:477px;top:307px;width:1px;height:15px;background:#d0d0d0;"></div>
<div class="t" style="left:482px;top:308.5px;font-size:8.40px;letter-spacing:0;color:#444;font-weight:normal;line-height:12px;transform:scaleX(0.8428);transform-origin:0 50%;">Target Process</div>
<div class="a" style="left:577px;top:307px;width:1px;height:15px;background:#d0d0d0;"></div>
<div class="a" style="left:202px;top:322px;width:1px;height:52px;background:#f2f2f2;"></div>
<div class="a" style="left:376px;top:322px;width:1px;height:52px;background:#f2f2f2;"></div>
<div class="a" style="left:477px;top:322px;width:1px;height:52px;background:#f2f2f2;"></div>
<div class="a" style="left:184px;top:335px;width:393px;height:1px;background:#ececec;"></div>
<div class="a" style="left:184px;top:354px;width:393px;height:1px;background:#ececec;"></div>
<div class="a" style="left:577px;top:322px;width:13px;height:52px;background:#f0f0f0;"></div>
<svg class="a" style="left:580px;top:323px" width="8" height="5" viewBox="0 0 8 5"><path d="M1 4L4 1L7 4" stroke="#555" stroke-width="1" fill="none"/></svg>
<div class="a" style="left:578px;top:344px;width:11px;height:20px;background:#c8c8c8;"></div>
<svg class="a" style="left:580px;top:367px" width="8" height="5" viewBox="0 0 8 5"><path d="M1 1L4 4L7 1" stroke="#555" stroke-width="1" fill="none"/></svg>
<div class="t" style="left:184px;top:384.5px;font-size:8.40px;letter-spacing:0;color:#555;font-weight:normal;line-height:12px;transform:scaleX(0.8452);transform-origin:0 50%;">Referenced Datum Parts</div>
<div class="a" style="left:183px;top:401px;width:408px;height:80px;background:#fff;border:1px solid #e2e2e2"></div>
<div class="a" style="left:184px;top:402px;width:406px;height:14px;background:#e6e6e6;"></div>
<svg class="a" style="left:188px;top:405.5px" width="10" height="7" viewBox="0 0 10 7"><path d="M0 3.5C1 -0.3 9 -0.3 10 3.5C9 7.3 1 7.3 0 3.5Z" fill="#7c7c7c"/><circle cx="5" cy="3.5" r="1.9" fill="#e6e6e6" opacity="0.55"/><circle cx="5" cy="3.5" r="1" fill="#7c7c7c"/></svg>
<div class="a" style="left:202px;top:402px;width:1px;height:14px;background:#d0d0d0;"></div>
<div class="t" style="left:207px;top:403.0px;font-size:8.40px;letter-spacing:0;color:#555;font-weight:normal;line-height:12px;transform:scaleX(0.8452);transform-origin:0 50%;">ID</div>
<div class="a" style="left:220px;top:402px;width:1px;height:14px;background:#d0d0d0;"></div>
<div class="t" style="left:225px;top:403.0px;font-size:8.40px;letter-spacing:0;color:#444;font-weight:normal;line-height:12px;transform:scaleX(0.8480);transform-origin:0 50%;">Part Name</div>
<div class="a" style="left:577px;top:402px;width:1px;height:14px;background:#d0d0d0;"></div>
<svg class="a" style="left:188px;top:422.5px" width="10" height="7" viewBox="0 0 10 7"><path d="M0 3.5C1 -0.3 9 -0.3 10 3.5C9 7.3 1 7.3 0 3.5Z" fill="#4a4a4a"/><circle cx="5" cy="3.5" r="1.9" fill="#fff" opacity="0.55"/><circle cx="5" cy="3.5" r="1" fill="#4a4a4a"/></svg>
<div class="t" style="left:207px;top:420.0px;font-size:8.40px;letter-spacing:0;color:#666;font-weight:normal;line-height:12px;transform:scaleX(0.8539);transform-origin:0 50%;">A1</div>
<div class="t" style="left:225.5px;top:420.0px;font-size:8.40px;letter-spacing:0;color:#555;font-weight:normal;line-height:12px;transform:scaleX(0.8739);transform-origin:0 50%;">Reference datum is not pointing to a part</div>
<svg class="a" style="left:188px;top:443.0px" width="10" height="7" viewBox="0 0 10 7"><path d="M0 3.5C1 -0.3 9 -0.3 10 3.5C9 7.3 1 7.3 0 3.5Z" fill="#4a4a4a"/><circle cx="5" cy="3.5" r="1.9" fill="#fff" opacity="0.55"/><circle cx="5" cy="3.5" r="1" fill="#4a4a4a"/></svg>
<div class="t" style="left:207px;top:440.5px;font-size:8.40px;letter-spacing:0;color:#666;font-weight:normal;line-height:12px;transform:scaleX(0.8539);transform-origin:0 50%;">A2</div>
<div class="t" style="left:225.5px;top:440.5px;font-size:8.40px;letter-spacing:0;color:#555;font-weight:normal;line-height:12px;transform:scaleX(0.8739);transform-origin:0 50%;">Reference datum is not pointing to a part</div>
<svg class="a" style="left:188px;top:462.5px" width="10" height="7" viewBox="0 0 10 7"><path d="M0 3.5C1 -0.3 9 -0.3 10 3.5C9 7.3 1 7.3 0 3.5Z" fill="#4a4a4a"/><circle cx="5" cy="3.5" r="1.9" fill="#fff" opacity="0.55"/><circle cx="5" cy="3.5" r="1" fill="#4a4a4a"/></svg>
<div class="t" style="left:207px;top:460.0px;font-size:8.40px;letter-spacing:0;color:#666;font-weight:normal;line-height:12px;transform:scaleX(0.8539);transform-origin:0 50%;">A3</div>
<div class="t" style="left:225.5px;top:460.0px;font-size:8.40px;letter-spacing:0;color:#555;font-weight:normal;line-height:12px;transform:scaleX(0.8739);transform-origin:0 50%;">Reference datum is not pointing to a part</div>
<div class="a" style="left:202px;top:416px;width:1px;height:57px;background:#f2f2f2;"></div>
<div class="a" style="left:220px;top:416px;width:1px;height:57px;background:#f2f2f2;"></div>
<div class="a" style="left:184px;top:436px;width:393px;height:1px;background:#ececec;"></div>
<div class="a" style="left:184px;top:455.5px;width:393px;height:1px;background:#ececec;"></div>
<div class="a" style="left:577px;top:416px;width:13px;height:57px;background:#f0f0f0;"></div>
<svg class="a" style="left:580px;top:418px" width="8" height="5" viewBox="0 0 8 5"><path d="M1 4L4 1L7 4" stroke="#555" stroke-width="1" fill="none"/></svg>
<div class="a" style="left:578px;top:427px;width:11px;height:11px;background:#c8c8c8;"></div>
<svg class="a" style="left:580px;top:464px" width="8" height="5" viewBox="0 0 8 5"><path d="M1 1L4 4L7 1" stroke="#555" stroke-width="1" fill="none"/></svg>
</div></body></html>
